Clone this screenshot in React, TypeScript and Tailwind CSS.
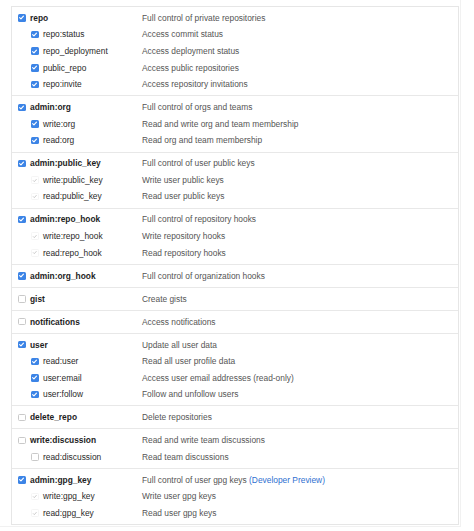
import React from "react";

type State = "on" | "off" | "dis";
type Row = { name: string; desc: React.ReactNode; state: State; sub?: boolean };

const groups: Row[][] = [
  [
    { name: "repo", desc: "Full control of private repositories", state: "on" },
    { name: "repo:status", desc: "Access commit status", state: "on", sub: true },
    { name: "repo_deployment", desc: "Access deployment status", state: "on", sub: true },
    { name: "public_repo", desc: "Access public repositories", state: "on", sub: true },
    { name: "repo:invite", desc: "Access repository invitations", state: "on", sub: true },
  ],
  [
    { name: "admin:org", desc: "Full control of orgs and teams", state: "on" },
    { name: "write:org", desc: "Read and write org and team membership", state: "on", sub: true },
    { name: "read:org", desc: "Read org and team membership", state: "on", sub: true },
  ],
  [
    { name: "admin:public_key", desc: "Full control of user public keys", state: "on" },
    { name: "write:public_key", desc: "Write user public keys", state: "dis", sub: true },
    { name: "read:public_key", desc: "Read user public keys", state: "dis", sub: true },
  ],
  [
    { name: "admin:repo_hook", desc: "Full control of repository hooks", state: "on" },
    { name: "write:repo_hook", desc: "Write repository hooks", state: "dis", sub: true },
    { name: "read:repo_hook", desc: "Read repository hooks", state: "dis", sub: true },
  ],
  [{ name: "admin:org_hook", desc: "Full control of organization hooks", state: "on" }],
  [{ name: "gist", desc: "Create gists", state: "off" }],
  [{ name: "notifications", desc: "Access notifications", state: "off" }],
  [
    { name: "user", desc: "Update all user data", state: "on" },
    { name: "read:user", desc: "Read all user profile data", state: "on", sub: true },
    { name: "user:email", desc: "Access user email addresses (read-only)", state: "on", sub: true },
    { name: "user:follow", desc: "Follow and unfollow users", state: "on", sub: true },
  ],
  [{ name: "delete_repo", desc: "Delete repositories", state: "off" }],
  [
    { name: "write:discussion", desc: "Read and write team discussions", state: "off" },
    { name: "read:discussion", desc: "Read team discussions", state: "off", sub: true },
  ],
  [
    {
      name: "admin:gpg_key",
      desc: (
        <>
          Full control of user gpg keys <span className="text-[#2f6fd0]">(Developer Preview)</span>
        </>
      ),
      state: "on",
    },
    { name: "write:gpg_key", desc: "Write user gpg keys", state: "dis", sub: true },
    { name: "read:gpg_key", desc: "Read user gpg keys", state: "dis", sub: true },
  ],
];

function Check({ state }: { state: State }) {
  if (state === "on") {
    return (
      <span className="flex h-[7.5px] w-[7.5px] shrink-0 items-center justify-center rounded-[1.5px] bg-[#3c84e6]">
        <svg viewBox="0 0 10 10" className="h-[7px] w-[7px]">
          <path d="M2.3 5.2 L4.2 7.1 L7.8 3" fill="none" stroke="#fff" strokeWidth="1.6" strokeLinecap="round" strokeLinejoin="round" />
        </svg>
      </span>
    );
  }
  if (state === "dis") {
    return (
      <span className="flex h-[7.5px] w-[7.5px] shrink-0 items-center justify-center rounded-[1.5px] border border-[#f5f5f5] bg-white">
        <svg viewBox="0 0 10 10" className="h-[7px] w-[7px]">
          <path d="M2.3 5.2 L4.2 7.1 L7.8 3" fill="none" stroke="#b8b8b8" strokeWidth="1.3" strokeLinecap="round" strokeLinejoin="round" />
        </svg>
      </span>
    );
  }
  return <span className="h-[7.5px] w-[7.5px] shrink-0 rounded-[1.5px] border border-[#c9c9c9] bg-white" />;
}

export default function App() {
  return (
    <div
      className="h-[531px] w-[474px] bg-white"
      style={{ fontFamily: '"Liberation Sans", Arial, sans-serif' }}
    >
      <div className="h-[527px] w-[461px] border-b border-r border-[#f1f1f1] pl-[11px] pt-[6px]">
        <div className="w-[448px] border border-[#e6e6e6] bg-white">
          {groups.map((g, gi) => (
            <div key={gi} className={`py-[2.7px] ${gi > 0 ? "border-t border-[#e8e8e8]" : ""}`}>
              {g.map((r) => (
                <div key={r.name} className="flex h-[16.6px] items-center text-[8.4px] leading-none">
                  <div className={`flex w-[130px] items-center gap-[4.5px] ${r.sub ? "pl-[19px]" : "pl-[6px]"}`}>
                    <Check state={r.state} />
                    <span className={r.sub ? "text-[#2a2a2a]" : "font-bold text-[#1e1e1e]"}>{r.name}</span>
                  </div>
                  <div className="flex-1 text-[#555]">{r.desc}</div>
                </div>
              ))}
            </div>
          ))}
        </div>
      </div>
    </div>
  );
}
